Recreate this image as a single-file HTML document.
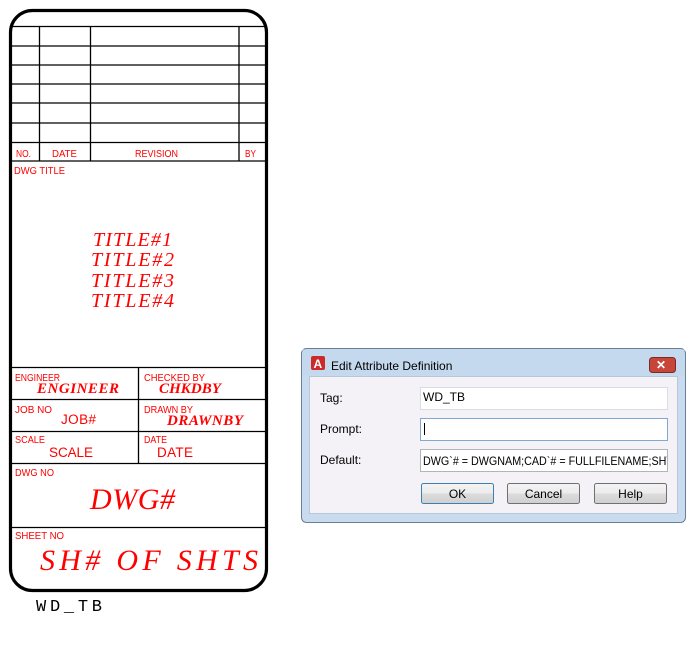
<!DOCTYPE html>
<html><head><meta charset="utf-8"><style>
html,body{margin:0;padding:0;background:#fff;width:700px;height:650px;overflow:hidden}
svg{display:block}
.l{stroke:#000;stroke-width:1.3;fill:none}
.s{font-family:"Liberation Sans",sans-serif;fill:#f00;font-size:10.5px}
.i{font-family:"Liberation Serif",serif;font-style:italic;fill:#f00}
.u{font-family:"Liberation Sans",sans-serif;fill:#f00}
.d{font-family:"Liberation Sans",sans-serif;font-size:12px;fill:#000}
</style></head><body>
<svg width="700" height="650" xmlns="http://www.w3.org/2000/svg">
<rect x="10.5" y="10.5" width="256" height="580" rx="22" ry="22" fill="none" stroke="#000" stroke-width="3.2"/>
<g class="l">
<path d="M12 26.5H266M12 46H266M12 65H266M12 84H266M12 103H266M12 123H266M12 142.5H266M12 161H266"/>
<path d="M39.5 26V161M90.5 26V161M239 26V161"/>
<path d="M12 367.5H266M12 399.5H266M12 431.5H266M12 463.5H266M12 527.5H266"/>
<path d="M138.5 367V463"/>
</g>
<text class="s" x="16" y="157" textLength="15" lengthAdjust="spacingAndGlyphs">NO.</text>
<text class="s" x="52" y="157" textLength="25" lengthAdjust="spacingAndGlyphs">DATE</text>
<text class="s" x="135" y="157" textLength="43" lengthAdjust="spacingAndGlyphs">REVISION</text>
<text class="s" x="245" y="157" textLength="11" lengthAdjust="spacingAndGlyphs">BY</text>
<text class="s" x="14" y="174" textLength="51" lengthAdjust="spacingAndGlyphs">DWG TITLE</text>
<text class="i" font-size="20" x="93" y="246" textLength="79">TITLE#1</text>
<text class="i" font-size="20" x="91" y="266" textLength="83">TITLE#2</text>
<text class="i" font-size="20" x="91" y="287" textLength="83">TITLE#3</text>
<text class="i" font-size="20" x="91" y="307" textLength="83">TITLE#4</text>
<text class="s" x="15" y="381" textLength="45" lengthAdjust="spacingAndGlyphs">ENGINEER</text>
<text class="i" font-size="15" font-weight="bold" x="37" y="393" textLength="82">ENGINEER</text>
<text class="s" x="144" y="381" textLength="61" lengthAdjust="spacingAndGlyphs">CHECKED BY</text>
<text class="i" font-size="15" font-weight="bold" x="159" y="393" textLength="62">CHKDBY</text>
<text class="s" x="15" y="413" textLength="37" lengthAdjust="spacingAndGlyphs">JOB NO</text>
<text class="u" font-size="13.5" x="61" y="424" textLength="35">JOB#</text>
<text class="s" x="144" y="413" textLength="49" lengthAdjust="spacingAndGlyphs">DRAWN BY</text>
<text class="i" font-size="15" font-weight="bold" x="167" y="425" textLength="76">DRAWNBY</text>
<text class="s" x="15" y="443" textLength="30" lengthAdjust="spacingAndGlyphs">SCALE</text>
<text class="u" font-size="13.5" x="49" y="457" textLength="44">SCALE</text>
<text class="s" x="144" y="443" textLength="23" lengthAdjust="spacingAndGlyphs">DATE</text>
<text class="u" font-size="13.5" x="157" y="457" textLength="36">DATE</text>
<text class="s" x="15" y="476" textLength="39" lengthAdjust="spacingAndGlyphs">DWG NO</text>
<text class="i" font-size="30" x="90" y="509" textLength="85">DWG#</text>
<text class="s" x="15" y="539" textLength="49" lengthAdjust="spacingAndGlyphs">SHEET NO</text>
<text class="i" font-size="30" x="40" y="570" textLength="218">SH# OF SHTS</text>
<text font-family="Liberation Mono,monospace" font-size="17" fill="#000" x="36" y="611" textLength="66">WD_TB</text>

<rect x="301.5" y="348.5" width="384" height="174" rx="5" fill="#c9dcef" stroke="#6b7f96"/>
<rect x="302.5" y="349.5" width="382" height="26" fill="#c4d9ee"/>
<rect x="311" y="356" width="14" height="14" rx="2" fill="#cc2a2a"/>
<text x="313.5" y="368" font-family="Liberation Sans,sans-serif" font-weight="bold" font-size="12" fill="#fff">A</text>
<text x="331" y="370" font-family="Liberation Sans,sans-serif" font-size="12" fill="#000">Edit Attribute Definition</text>
<rect x="649.5" y="357.5" width="26" height="15" rx="3" fill="#c8453a" stroke="#7a2a24"/>
<text x="656" y="369" font-family="Liberation Sans,sans-serif" font-weight="bold" font-size="12" fill="#fff">✕</text>
<rect x="309.5" y="376.5" width="368" height="137" fill="#f4f2f6" stroke="#b8c8d8"/>
<text class="d" x="320" y="402">Tag:</text>
<text class="d" x="320" y="433">Prompt:</text>
<text class="d" x="320" y="464">Default:</text>
<rect x="420.5" y="387.5" width="247" height="22" fill="#fff" stroke="#d8dde3"/>
<text class="d" x="423" y="401">WD_TB</text>
<rect x="420.5" y="418.5" width="247" height="22" fill="#fff" stroke="#7ea9d3"/>
<path d="M424.5 423V435" stroke="#000"/>
<rect x="420.5" y="449.5" width="247" height="22" fill="#fff" stroke="#b0b5bb"/>
<svg x="421" y="450" width="246" height="21"><text class="d" x="2" y="15" textLength="250" lengthAdjust="spacingAndGlyphs">DWG`# = DWGNAM;CAD`# = FULLFILENAME;SHT</text></svg>
<defs><linearGradient id="b" x1="0" y1="0" x2="0" y2="1"><stop offset="0" stop-color="#f4f4f4"/><stop offset=".5" stop-color="#ebebeb"/><stop offset=".51" stop-color="#dcdcdc"/><stop offset="1" stop-color="#cfcfcf"/></linearGradient></defs>
<rect x="421.5" y="483.5" width="72" height="20" rx="2" fill="url(#b)" stroke="#3c7fb1"/>
<rect x="507.5" y="483.5" width="72" height="20" rx="2" fill="url(#b)" stroke="#707070"/>
<rect x="594.5" y="483.5" width="72" height="20" rx="2" fill="url(#b)" stroke="#707070"/>
<text class="d" x="457.5" y="498" text-anchor="middle">OK</text>
<text class="d" x="543.5" y="498" text-anchor="middle">Cancel</text>
<text class="d" x="630.5" y="498" text-anchor="middle">Help</text>
</svg>
</body></html>
